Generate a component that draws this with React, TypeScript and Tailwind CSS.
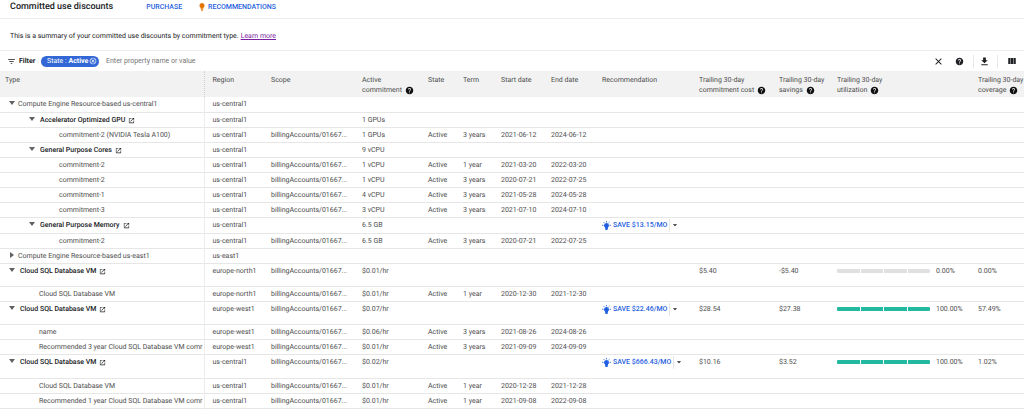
import type { ReactNode } from "react";
import {
	MdArrowDropDown,
	MdClose,
	MdFileDownload,
	MdFilterList,
	MdHelp,
	MdOpenInNew,
	MdOutlineCancel,
	MdViewColumn,
} from "react-icons/md";

type Row = {
	name: string;
	kind: "group" | "service" | "resource" | "item" | "subitem";
	collapsed?: boolean;
	height?: string;
	region: string;
	scope?: boolean;
	commitment?: string;
	term?: string;
	start?: string;
	end?: string;
	save?: string;
	cost?: string;
	savings?: string;
	utilization?: number;
	coverage?: string;
};

const rows: Row[] = [
	{ name: "Compute Engine Resource-based us-central1", kind: "group", region: "us-central1" },
	{ name: "Accelerator Optimized GPU", kind: "resource", region: "us-central1", commitment: "1 GPUs" },
	{
		name: "commitment-2 (NVIDIA Tesla A100)",
		kind: "subitem",
		region: "us-central1",
		scope: true,
		commitment: "1 GPUs",
		term: "3 years",
		start: "2021-06-12",
		end: "2024-06-12",
	},
	{ name: "General Purpose Cores", kind: "resource", region: "us-central1", commitment: "9 vCPU" },
	{
		name: "commitment-2",
		kind: "subitem",
		region: "us-central1",
		scope: true,
		commitment: "1 vCPU",
		term: "1 year",
		start: "2021-03-20",
		end: "2022-03-20",
	},
	{
		name: "commitment-2",
		kind: "subitem",
		region: "us-central1",
		scope: true,
		commitment: "1 vCPU",
		term: "3 years",
		start: "2020-07-21",
		end: "2022-07-25",
	},
	{
		name: "commitment-1",
		kind: "subitem",
		region: "us-central1",
		scope: true,
		commitment: "4 vCPU",
		term: "3 years",
		start: "2021-05-28",
		end: "2024-05-28",
	},
	{
		name: "commitment-3",
		kind: "subitem",
		region: "us-central1",
		scope: true,
		commitment: "3 vCPU",
		term: "3 years",
		start: "2021-07-10",
		end: "2024-07-10",
	},
	{
		name: "General Purpose Memory",
		kind: "resource",
		height: "h-[16px]",
		region: "us-central1",
		commitment: "6.5 GB",
		save: "$13.15",
	},
	{
		name: "commitment-2",
		kind: "subitem",
		region: "us-central1",
		scope: true,
		commitment: "6.5 GB",
		term: "3 years",
		start: "2020-07-21",
		end: "2022-07-25",
	},
	{ name: "Compute Engine Resource-based us-east1", kind: "group", collapsed: true, region: "us-east1" },
	{
		name: "Cloud SQL Database VM",
		kind: "service",
		height: "h-[23px]",
		region: "europe-north1",
		scope: true,
		commitment: "$0.01/hr",
		cost: "$5.40",
		savings: "-$5.40",
		utilization: 0,
		coverage: "0.00%",
	},
	{
		name: "Cloud SQL Database VM",
		kind: "item",
		region: "europe-north1",
		scope: true,
		commitment: "$0.01/hr",
		term: "1 year",
		start: "2020-12-30",
		end: "2021-12-30",
	},
	{
		name: "Cloud SQL Database VM",
		kind: "service",
		height: "h-[23px]",
		region: "europe-west1",
		scope: true,
		commitment: "$0.07/hr",
		save: "$22.46",
		cost: "$28.54",
		savings: "$27.38",
		utilization: 100,
		coverage: "57.49%",
	},
	{
		name: "name",
		kind: "item",
		region: "europe-west1",
		scope: true,
		commitment: "$0.06/hr",
		term: "3 years",
		start: "2021-08-26",
		end: "2024-08-26",
	},
	{
		name: "Recommended 3 year Cloud SQL Database VM comr",
		kind: "item",
		region: "europe-west1",
		scope: true,
		commitment: "$0.01/hr",
		term: "3 years",
		start: "2021-09-09",
		end: "2024-09-09",
	},
	{
		name: "Cloud SQL Database VM",
		kind: "service",
		height: "h-[24px]",
		region: "us-central1",
		scope: true,
		commitment: "$0.02/hr",
		save: "$666.43",
		cost: "$10.16",
		savings: "$3.52",
		utilization: 100,
		coverage: "1.02%",
	},
	{
		name: "Cloud SQL Database VM",
		kind: "item",
		region: "us-central1",
		scope: true,
		commitment: "$0.01/hr",
		term: "1 year",
		start: "2020-12-28",
		end: "2021-12-28",
	},
	{
		name: "Recommended 1 year Cloud SQL Database VM comr",
		kind: "item",
		region: "us-central1",
		scope: true,
		commitment: "$0.01/hr",
		term: "1 year",
		start: "2021-09-08",
		end: "2022-09-08",
	},
];

const columns: { title: string; second?: string; width: string }[] = [
	{ title: "Type", width: "w-[204px]" },
	{ title: "Region", width: "w-[59px]" },
	{ title: "Scope", width: "w-[91px]" },
	{ title: "Active", second: "commitment", width: "w-[66px]" },
	{ title: "State", width: "w-[35px]" },
	{ title: "Term", width: "w-[38px]" },
	{ title: "Start date", width: "w-[50px]" },
	{ title: "End date", width: "w-[51px]" },
	{ title: "Recommendation", width: "w-[97px]" },
	{ title: "Trailing 30-day", second: "commitment cost", width: "w-[80px]" },
	{ title: "Trailing 30-day", second: "savings", width: "w-[58px]" },
	{ title: "Trailing 30-day", second: "utilization", width: "w-[141px]" },
	{ title: "Trailing 30-day", second: "coverage", width: "w-[54px]" },
];

const indents = {
	group: "pl-[9px] gap-[3px]",
	service: "pl-[9px] gap-[5px]",
	resource: "pl-[29px] gap-[5px]",
	item: "pl-[39px]",
	subitem: "pl-[59px]",
};

const Bulb = ({ rays }: { rays?: boolean }) =>
	rays ? (
		<svg className="size-[9px] shrink-0" viewBox="0 0 18 18" fill="currentColor" aria-hidden="true">
			<path d="M9 4.200a5 5 0 0 0-3 9V15h6v-1.800a5 5 0 0 0-3-9zM6.800 15h4.400v3H6.800z" />
			<path
				d="M9 0v2.800M3 2.200l2.200 2.200M15 2.200l-2.200 2.200M0 8.600h3M15 8.600h3"
				stroke="currentColor"
				strokeWidth="1.600"
				fill="none"
			/>
		</svg>
	) : (
		<svg className="h-[8px] w-[6px] shrink-0" viewBox="0 0 12 18" fill="#e37400" aria-hidden="true">
			<path d="M6 0a5.800 5.800 0 0 0-3.200 10.600V13h6.400v-2.400A5.800 5.800 0 0 0 6 0zM3.600 14h4.800v2L7.400 17.500H4.600L3.600 16z" />
		</svg>
	);

const Cell = ({ children }: { children?: ReactNode }) => (
	<td className="overflow-hidden pt-px pl-2 align-top text-ellipsis">{children}</td>
);

const TypeCell = ({ row }: { row: Row }) => {
	const expandable = row.kind !== "item" && row.kind !== "subitem";
	const linked = row.kind === "service" || row.kind === "resource";
	return (
		<td className="overflow-hidden border-r border-r-[#ececec] pt-px pr-[2px] align-top">
			<div className={`flex items-center ${indents[row.kind]}`}>
				{expandable && (
					<button
						type="button"
						aria-label={row.collapsed ? "Expand" : "Collapse"}
						className="flex h-[13px] w-[6px] shrink-0 pt-[2px]"
					>
						<svg className="size-[6px]" viewBox="0 0 6 6" fill="#616161" aria-hidden="true">
							<path d={row.collapsed ? "M1 0v6l4-3z" : "M0 1h6L3 5z"} />
						</svg>
					</button>
				)}
				{linked ? (
					<a href="#" className="flex items-center gap-[3px] font-medium text-[#202124]">
						{row.name}
						<MdOpenInNew className="size-[7px]" />
					</a>
				) : (
					<span>{row.name}</span>
				)}
			</div>
		</td>
	);
};

const SaveButton = ({ amount }: { amount: string }) => (
	<div className="flex h-[13px] items-center">
		<button type="button" className="flex items-center gap-[2px] font-medium text-[#1f5fe0]">
			<Bulb rays />
			SAVE {amount}/MO
		</button>
		<button
			type="button"
			aria-label="More actions"
			className="ml-[2px] flex h-[13px] items-center border-l border-[#e4e4e4] text-[#202124]"
		>
			<MdArrowDropDown className="size-[10px]" />
		</button>
	</div>
);

const Utilization = ({ value }: { value: number }) => (
	<div className="flex items-center gap-[6px]">
		<div className="flex h-[4px] flex-1 gap-px overflow-hidden rounded-[1px]">
			{[0, 25, 50, 75].map((from) => (
				<span key={from} className={`flex-1 ${value > from ? "bg-[#22b9a0]" : "bg-[#e0e0e0]"}`} />
			))}
		</div>
		<span className="w-[34px]">{value.toFixed(2)}%</span>
	</div>
);

const Toolbar = () => (
	<div className="flex h-[20px] items-center text-[7px]">
		<span className="flex w-[41px] items-center gap-[3px] pl-[7px] font-bold text-[#202124]">
			<MdFilterList className="size-[9px]" />
			<label htmlFor="filter">Filter</label>
		</span>
		<span className="flex h-[11px] w-[58px] items-center justify-between rounded-full bg-[#3367d6] pr-[2px] pl-[6px] whitespace-nowrap text-white">
			<span>
				State : <b>Active</b>
			</span>
			<button type="button" aria-label="Remove filter">
				<MdOutlineCancel className="size-[8px]" />
			</button>
		</span>
		<input
			id="filter"
			className="ml-[7px] min-w-0 flex-1 outline-none placeholder:text-[#757575]"
			placeholder="Enter property name or value"
		/>
		<div className="flex items-center pr-[7px] text-[#202124]">
			<button type="button" aria-label="Clear filters" className="px-[5px]">
				<MdClose className="size-[11px]" />
			</button>
			<button type="button" aria-label="Help" className="pr-[9px] pl-[6px]">
				<MdHelp className="size-[9px]" />
			</button>
			<button type="button" aria-label="Download" className="border-x border-[#e8e8e8] pr-[7px] pl-[5px] py-px">
				<MdFileDownload className="size-[11px]" />
			</button>
			<button type="button" aria-label="Choose columns" className="pl-[9px]">
				<MdViewColumn className="size-[10px]" />
			</button>
		</div>
	</div>
);

export default function App() {
	return (
		<main className="bg-white font-[Roboto,sans-serif] text-[7px] leading-[13px] text-[#4d4d4d] [text-rendering:geometricPrecision]">
			<header className="flex h-[19px] items-start border-b border-[#ececec] pt-px pl-[10px] leading-3 font-medium">
				<h1 className="text-[9px] text-[#202124]">Committed use discounts</h1>
				<button type="button" className="ml-[33px] text-[#1f5fe0]">
					PURCHASE
				</button>
				<button type="button" className="ml-[17px] flex items-center gap-[3px] text-[#1f5fe0]">
					<Bulb />
					RECOMMENDATIONS
				</button>
			</header>
			<p className="flex h-[32px] items-center gap-[2px] border-b border-[#ececec] pt-[4px] pl-[10px] text-[#202124]">
				This is a summary of your committed use discounts by commitment type.
				<a href="#" className="text-[#7b1fa2] underline">
					Learn more
				</a>
			</p>
			<Toolbar />
			<table className="w-full table-fixed border-collapse whitespace-nowrap">
				<thead>
					<tr className="h-[26px] bg-[#f2f2f2] text-left leading-[10px] text-[#4d4d4d]">
						{columns.map((column, i) => (
							<th
								key={i}
								scope="col"
								className={`pt-[4px] align-top font-normal ${column.width} ${i === 0 ? "border-r border-dotted border-[#cfcfcf] pl-[5px]" : "pl-2"}`}
							>
								{column.title}
								{column.second && (
									<span className="flex items-center gap-[3px]">
										{column.second}
										<MdHelp className="size-[9px] text-[#111111]" />
									</span>
								)}
							</th>
						))}
					</tr>
				</thead>
				<tbody>
					{rows.map((row, i) => (
						<tr key={i} className={`border-b border-[#e6e6e6] ${row.height ?? "h-[15px]"}`}>
							<TypeCell row={row} />
							<Cell>{row.region}</Cell>
							<Cell>{row.scope && "billingAccounts/01667..."}</Cell>
							<Cell>{row.commitment}</Cell>
							<Cell>{row.term && "Active"}</Cell>
							<Cell>{row.term}</Cell>
							<Cell>{row.start}</Cell>
							<Cell>{row.end}</Cell>
							<Cell>{row.save && <SaveButton amount={row.save} />}</Cell>
							<Cell>{row.cost}</Cell>
							<Cell>{row.savings}</Cell>
							<Cell>{row.utilization !== undefined && <Utilization value={row.utilization} />}</Cell>
							<Cell>{row.coverage}</Cell>
						</tr>
					))}
				</tbody>
			</table>
		</main>
	);
}
